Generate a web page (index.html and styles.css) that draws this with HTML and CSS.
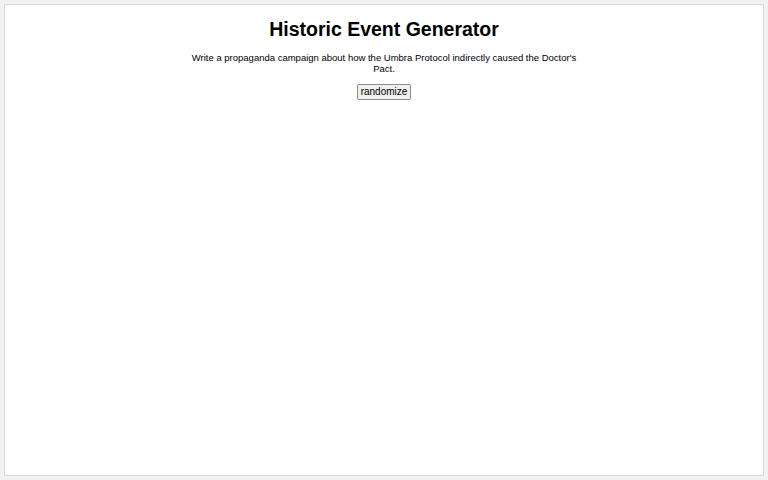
FILE: index.html
```html
<!DOCTYPE html>
<html lang="en">
<head>
    <meta charset="UTF-8">
    <meta name="viewport" content="width=device-width, initial-scale=1.0">
    <title>Historic Event Generator</title>
    <link rel="stylesheet" href="styles.css">
</head>
<body>
    <div class="container">
        <h1>Historic Event Generator</h1>
        <p id="prompt" class="prompt">Write a propaganda campaign about how the Umbra Protocol indirectly caused the Doctor's Pact.</p>
        <button id="randomize" type="button">randomize</button>
    </div>
</body>
</html>
```

FILE: styles.css
```css
html, body {
    height: 100%;
}
body {
    background: #f2f2f2;
    font-family: 'Liberation Sans', Arial, sans-serif;
    margin: 0;
    padding: 4px;
    box-sizing: border-box;
}
.container {
    background: #fff;
    border: 1px solid #dcdcdc;
    height: 100%;
    box-sizing: border-box;
    text-align: center;
    padding-top: 13px;
}
h1 {
    font-size: 19.5px;
    margin: 0 0 11px 0;
}
.prompt {
    font-size: 9.5px;
    line-height: 11px;
    max-width: 400px;
    margin: 0 auto 10px auto;
}
button {
    font-family: 'Liberation Sans', Arial, sans-serif;
    font-size: 10px;
    line-height: 12px;
    padding: 1px 3px;
    vertical-align: top;
    background: #efefef;
    border: 1px solid #8f8f8f;
    border-radius: 2px;
    color: #000;
}
```
